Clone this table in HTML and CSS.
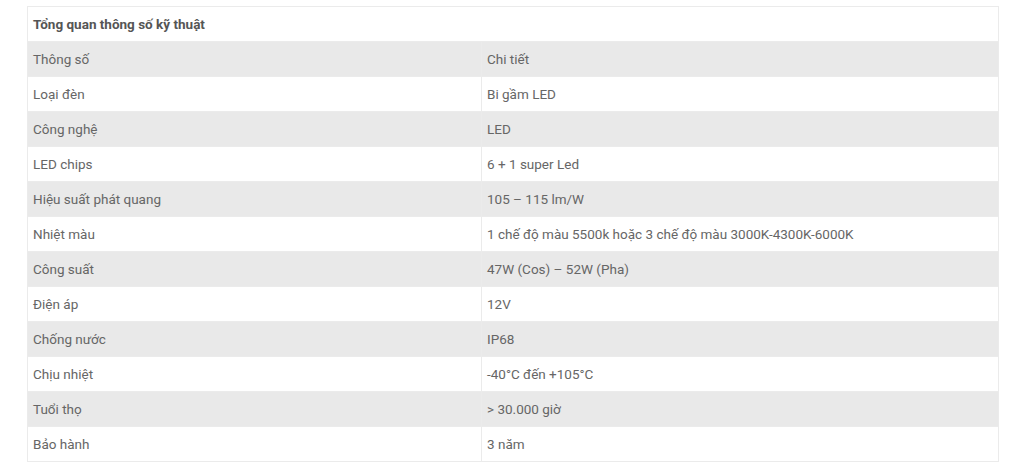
FILE: index.html
```html
<!DOCTYPE html>
<html lang="vi">
<head>
<meta charset="utf-8">
<link rel="stylesheet" href="styles.css">
</head>
<body>
<table class="spec">
  <colgroup><col class="c1"><col class="c2"></colgroup>
  <tr class="head"><td colspan="2">Tổng quan thông số kỹ thuật</td></tr>
  <tr class="alt"><td>Thông số</td><td>Chi tiết</td></tr>
  <tr><td>Loại đèn</td><td>Bi gầm LED</td></tr>
  <tr class="alt"><td>Công nghệ</td><td>LED</td></tr>
  <tr><td>LED chips</td><td>6 + 1 super Led</td></tr>
  <tr class="alt"><td>Hiệu suất phát quang</td><td>105 – 115 lm/W</td></tr>
  <tr><td>Nhiệt màu</td><td>1 chế độ màu 5500k hoặc 3 chế độ màu 3000K-4300K-6000K</td></tr>
  <tr class="alt"><td>Công suất</td><td>47W (Cos) – 52W (Pha)</td></tr>
  <tr><td>Điện áp</td><td>12V</td></tr>
  <tr class="alt"><td>Chống nước</td><td>IP68</td></tr>
  <tr><td>Chịu nhiệt</td><td>-40°C đến +105°C</td></tr>
  <tr class="alt"><td>Tuổi thọ</td><td>&gt; 30.000 giờ</td></tr>
  <tr><td>Bảo hành</td><td>3 năm</td></tr>
</table>
</body>
</html>
```
FILE: styles.css
```css
html, body { margin: 0; padding: 0; background: #fff; }
body { padding: 6px 0 0 27px; font-family: Roboto, "Liberation Sans", sans-serif; }
.spec {
  width: 972px;
  border-collapse: collapse;
  table-layout: fixed;
  font-size: 13.5px;
  color: #666;
}
.c1 { width: 454px; }
.spec td {
  height: 35px;
  box-sizing: border-box;
  padding: 0 5px;
  border: 1px solid #ebebeb;
  vertical-align: middle;
}
.spec tr.alt td { background: #e9e9e9; }
.spec tr.head td { font-weight: bold; color: #555; }
```
